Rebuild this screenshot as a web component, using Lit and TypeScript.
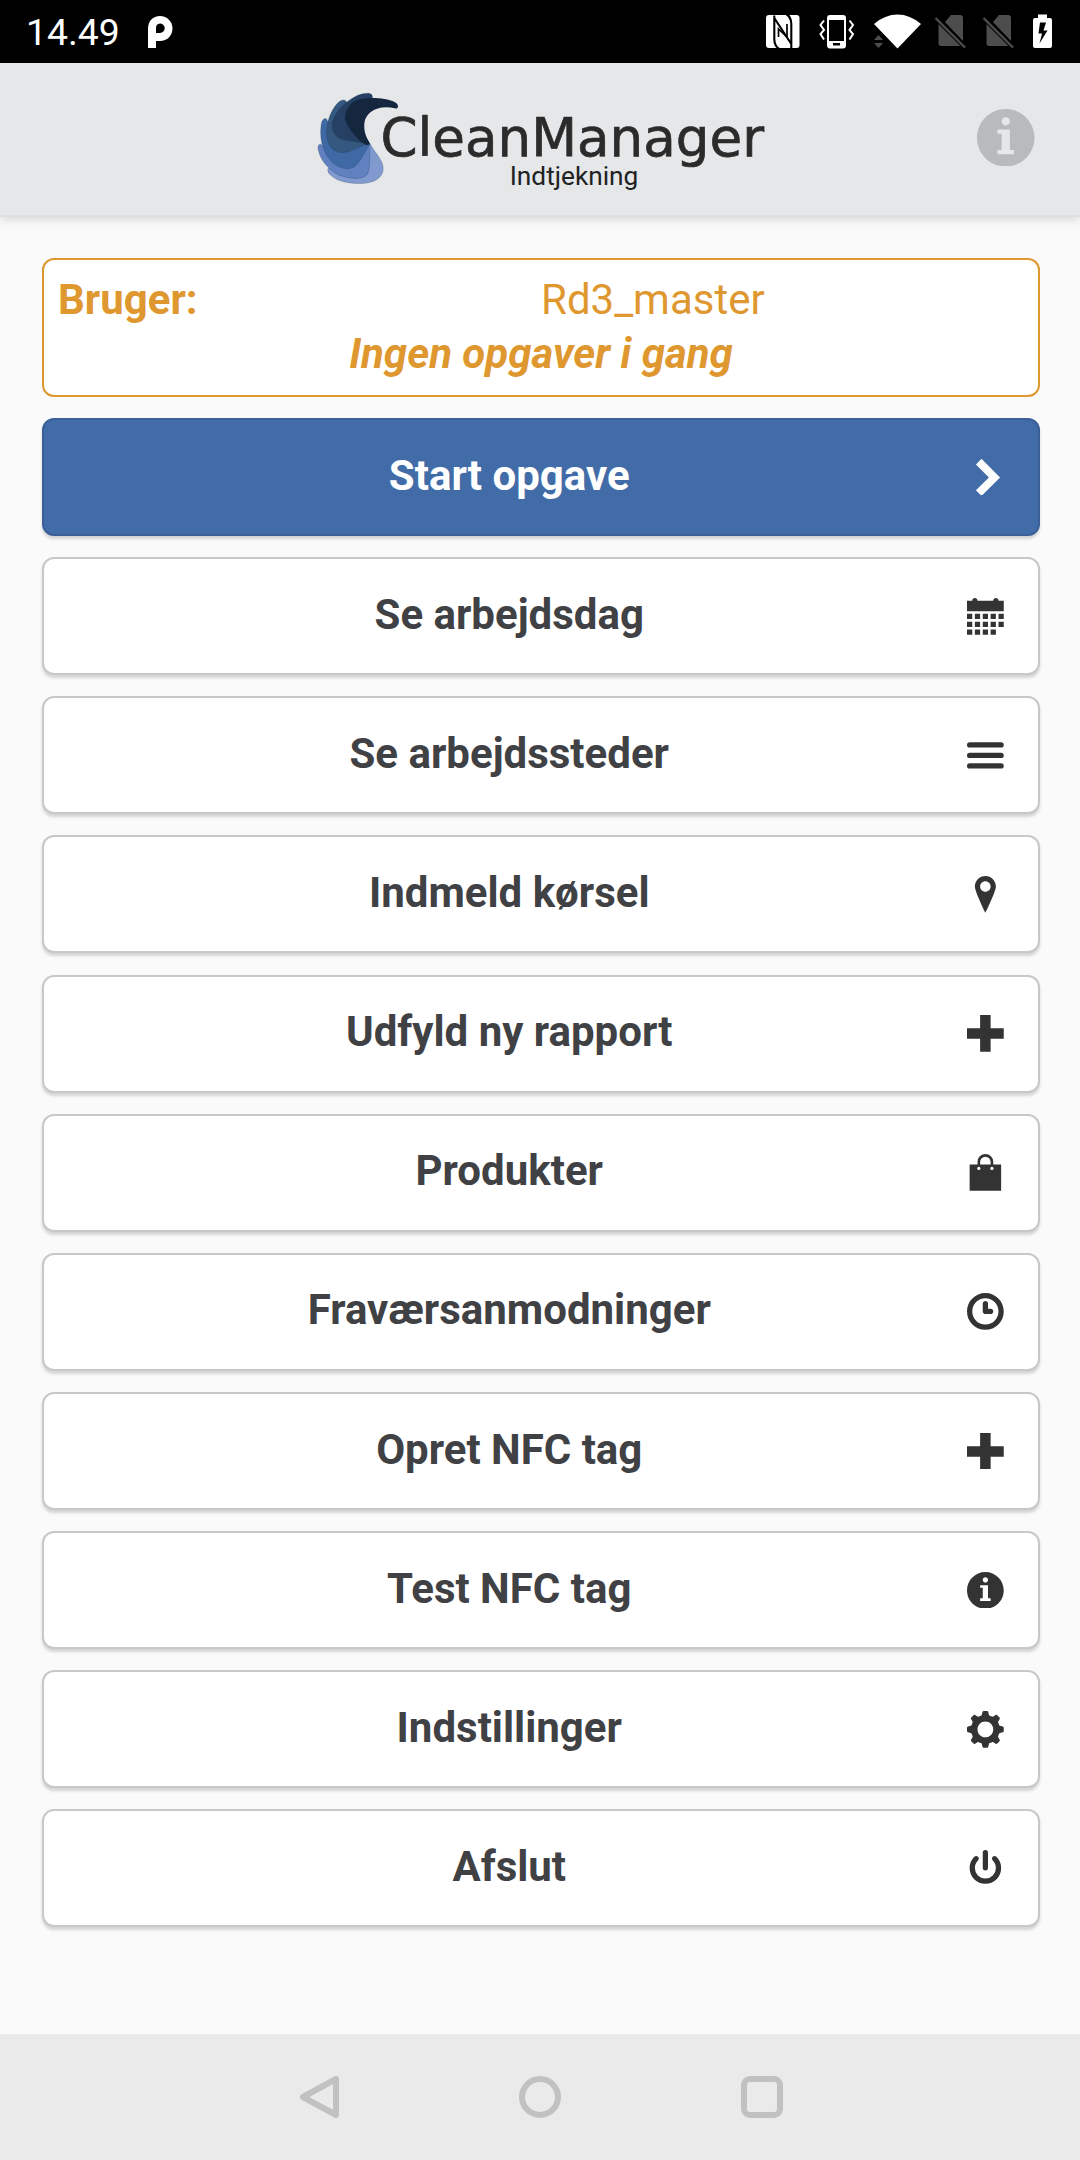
import { LitElement, html, css, svg } from "lit";
import { customElement } from "lit/decorators.js";

const INFO = svg`<path fill-rule="evenodd" d="M7,0C3.134,0,0,3.134,0,7s3.134,7,7,7s7-3.134,7-7S10.866,0,7,0z M7,2c0.552,0,1,0.447,1,1S7.552,4,7,4S6,3.553,6,3S6.448,2,7,2z M9,11H5v-1h1V6H5V5h3v5h1V11z"/>`;

const PLUS = svg`<polygon points="14,5 9,5 9,0 5,0 5,5 0,5 0,9 5,9 5,14 9,14 9,9 14,9"/>`;

const ICONS = {
  carat: svg`<polygon points="3.404,2.051 5.525,-0.071 12.6,7 5.525,14.071 3.404,11.949 8.354,7"/>`,
  calendar: svg`<path d="M0,8h2V6H0V8z M3,8h2V6H3V8z M6,8h2V6H6V8z M9,8h2V6H9V8z M12,8h2V6h-2V8z M0,11h2V9H0V11z M3,11h2V9H3V11z M6,11h2V9H6V11z M9,11h2V9H9V11z M12,11h2V9h-2V11z M0,14h2v-2H0V14z M3,14h2v-2H3V14z M6,14h2v-2H6V14z M9,14h2v-2H9V14z M12,1c0-0.553-0.447-1-1-1s-1,0.447-1,1H4c0-0.553-0.447-1-1-1S2,0.447,2,1H0v4h14V1H12z"/>`,
  bars: svg`<rect x="0" y="2" width="14" height="2" rx="1"/><rect x="0" y="6" width="14" height="2" rx="1"/><rect x="0" y="10" width="14" height="2" rx="1"/>`,
  location: svg`<path fill-rule="evenodd" d="M7,0C4.791,0,3,1.791,3,4c0,2,4,10,4,10s4-8,4-10C11,1.791,9.209,0,7,0z M7,6C5.896,6,5,5.104,5,4s0.896-2,2-2c1.104,0,2,0.896,2,2S8.104,6,7,6z"/>`,
  plus: PLUS,
  shop: svg`<rect x="1" y="4" width="12" height="10"/><path class="stroke" stroke-width="1" d="M4.5,5V3a2.5,2.5 0 0 1 5,0V5"/><circle class="hole" cx="4.5" cy="5.5" r=".6"/><circle class="hole" cx="9.5" cy="5.5" r=".6"/>`,
  clock: svg`<path fill-rule="evenodd" d="M7,0C3.134,0,0,3.134,0,7s3.134,7,7,7s7-3.134,7-7S10.866,0,7,0z M7,12c-2.762,0-5-2.238-5-5s2.238-5,5-5s5,2.238,5,5S9.762,12,7,12z"/><path d="M9,6H8V4c0-0.553-0.447-1-1-1S6,3.447,6,4v3c0,0.553,0.447,1,1,1h2c0.553,0,1-0.447,1-1S9.553,6,9,6z"/>`,
  info: INFO,
  gear: svg`<path fill-rule="evenodd" d="M13.621,5.904l-1.036-0.259c-0.168-0.042-0.303-0.168-0.355-0.332c-0.092-0.284-0.205-0.559-0.339-0.82c-0.079-0.153-0.073-0.337,0.017-0.486l0.549-0.915c0.118-0.196,0.088-0.448-0.075-0.61l-0.862-0.863c-0.162-0.163-0.414-0.193-0.611-0.075l-0.916,0.55C9.844,2.182,9.659,2.188,9.506,2.109C9.244,1.975,8.97,1.861,8.686,1.77c-0.165-0.052-0.29-0.187-0.332-0.354L8.095,0.379C8.039,0.156,7.839,0,7.609,0H6.391c-0.229,0-0.43,0.156-0.485,0.379L5.646,1.415C5.604,1.582,5.479,1.718,5.313,1.77c-0.284,0.092-0.559,0.206-0.82,0.34C4.339,2.188,4.155,2.182,4.007,2.093L3.092,1.544c-0.196-0.118-0.448-0.087-0.61,0.075L1.619,2.481C1.457,2.644,1.426,2.896,1.544,3.093l0.549,0.914c0.089,0.148,0.095,0.332,0.017,0.486C1.975,4.755,1.861,5.029,1.77,5.314c-0.053,0.164-0.188,0.29-0.354,0.332L0.379,5.905C0.156,5.961,0,6.161,0,6.391v1.219c0,0.229,0.156,0.43,0.379,0.485l1.036,0.26C1.582,8.396,1.717,8.521,1.77,8.687c0.092,0.284,0.205,0.559,0.34,0.82C2.188,9.66,2.182,9.844,2.093,9.993l-0.549,0.915c-0.118,0.195-0.087,0.448,0.075,0.61l0.862,0.862c0.162,0.163,0.414,0.193,0.61,0.075l0.915-0.549c0.148-0.089,0.332-0.095,0.486-0.017c0.262,0.135,0.536,0.248,0.82,0.34c0.165,0.053,0.291,0.187,0.332,0.354l0.259,1.036C5.96,13.844,6.16,14,6.39,14h1.22c0.229,0,0.43-0.156,0.485-0.379l0.259-1.036c0.042-0.167,0.168-0.302,0.333-0.354c0.284-0.092,0.559-0.205,0.82-0.34c0.154-0.078,0.338-0.072,0.486,0.017l0.914,0.549c0.197,0.118,0.449,0.088,0.611-0.074l0.862-0.863c0.163-0.162,0.193-0.415,0.075-0.611l-0.549-0.915c-0.089-0.148-0.096-0.332-0.017-0.485c0.134-0.263,0.248-0.536,0.339-0.82c0.053-0.165,0.188-0.291,0.355-0.333l1.036-0.259C13.844,8.039,14,7.839,14,7.609V6.39C14,6.16,13.844,5.96,13.621,5.904z M7,10c-1.657,0-3-1.343-3-3s1.343-3,3-3s3,1.343,3,3S8.657,10,7,10z"/>`,
  power: svg`<path class="stroke" stroke-width="2" stroke-linecap="round" d="M7,1V6.8M3.5,3.3A5,5 0 1 0 10.5,3.3"/>`,
};

type Item = { label: string; icon: keyof typeof ICONS; primary?: boolean };

const ITEMS: Item[] = [
  { label: "Start opgave", icon: "carat", primary: true },
  { label: "Se arbejdsdag", icon: "calendar" },
  { label: "Se arbejdssteder", icon: "bars" },
  { label: "Indmeld kørsel", icon: "location" },
  { label: "Udfyld ny rapport", icon: "plus" },
  { label: "Produkter", icon: "shop" },
  { label: "Fraværsanmodninger", icon: "clock" },
  { label: "Opret NFC tag", icon: "plus" },
  { label: "Test NFC tag", icon: "info" },
  { label: "Indstillinger", icon: "gear" },
  { label: "Afslut", icon: "power" },
];

@customElement("status-bar")
class StatusBar extends LitElement {
  static styles = css`
    :host {
      display: flex;
      height: 63px;
      background: #000;
      color: #fff;
      font: 37.300px/64px Roboto, sans-serif;
    }
    .time { padding-left: 26px; width: 95px; white-space: nowrap; }
    .icons { display: block; width: 959px; height: 63px; }
  `;
  render() {
    return html`
      <span class="time">14.49</span>
      <svg class="icons" viewBox="121 0 959 63" fill="#fff">
        <path fill-rule="evenodd" d="M148 48V29C148 21 153 16 160 16S172.500 21.500 172.500 28.500S167 41 160 41H156V48ZM160 23.500A4.500 4.500 0 0 0 156 28V33H160A4.500 4.500 0 0 0 160 23.500Z"/>
        <rect x="766" y="15" width="33.500" height="33" rx="3"/>
        <path d="M774.300 15.500V39C774.300 44 775.500 47 780 49.500M791.300 48V24C791.300 19 790 16 785.500 13.500M774.300 18L791.300 44" fill="none" stroke="#000" stroke-width="2.100"/>
        <path d="M778.500 37V29L787 37V24" fill="none" stroke="#000" stroke-width="1.700"/>
        <path fill-rule="evenodd" d="M830 15H843Q846 15 846 18V45Q846 48.500 843 48.500H830Q827 48.500 827 45V18Q827 15 830 15ZM829 20V41H844V20ZM833 43V45.500H840V43Z"/>
        <path d="M824 20.500L820.500 25L824 30L820.500 34L824 39.500M849.500 20.500L853 25L849.500 30L853 34L849.500 39.500" fill="none" stroke="#fff" stroke-width="2"/>
        <path d="M874 24Q885 14.500 897.500 14.500T921 24L897.500 48.500Z"/>
        <path fill="#4d4d4d" d="M874 40L878.500 35L883 40ZM874 43L878.500 48L883 43Z"/>
        <g id="no-sim">
          <path fill="#4d4d4d" d="M945 22L951 15H960Q963 15 963 18V41ZM938.500 24L960.500 46H941Q938.500 46 938.500 43Z"/>
          <path d="M935.500 18L965 47.500" stroke="#4d4d4d" stroke-width="2.400"/>
        </g>
        <use href="#no-sim" x="48"/>
        <path fill-rule="evenodd" d="M1038 14.500H1047V18H1050Q1052 18 1052 20V46Q1052 48 1050 48H1035Q1033 48 1033 46V20Q1033 18 1035 18H1038ZM1040 22.500L1038.500 33.500H1042L1039.500 43.500L1047.500 30.500H1043.500L1046 22.500Z"/>
      </svg>
    `;
  }
}

@customElement("page-header")
class PageHeader extends LitElement {
  static styles = css`
    :host {
      display: grid;
      grid-template-columns: 300px 1fr 300px;
      height: 152px;
      box-sizing: content-box;
      border-bottom: 2px solid #dedede;
      background: #e5e7e9;
      box-shadow: 0 3px 9px rgba(0, 0, 0, 0.13);
      position: relative;
    }
    .logo { grid-column: 2; display: block; width: 480px; height: 152px; }
    .brand { font-family: "DejaVu Sans", sans-serif; font-size: 52.500px; fill: #2b2b2b; stroke: #2b2b2b; stroke-width: 0.700px; }
    .sub { font-family: Roboto, sans-serif; font-size: 26.25px; fill: #222; }
    .info { justify-self: end; margin: 45.500px 45.500px 0 0; width: 57.500px; height: 57.500px; fill: #b8babb; }
  `;
  render() {
    return html`
      <svg class="logo" viewBox="300 63 480 152">
        <g transform="translate(300 70) scale(.33333)" stroke="#1c2f4b" stroke-opacity=".45" stroke-width="1.500">
          <path fill="#8099cf" d="M90 293C82 292 81 302 88 312C110 335 150 343 195 340C232 336 254 316 249 288C243 262 222 246 210 220Z"/>
          <path fill="#6080bf" d="M68 228C62 219 53 222 54 235C58 262 75 290 110 312C145 328 190 332 203 312C212 290 209 250 209 222Z"/>
          <path fill="#3f69a5" d="M82 153C80 141 68 144 64 160C58 200 64 242 95 276C118 297 150 302 166 288C186 268 196 244 209 222Z"/>
          <path fill="#34587f" d="M140 97C136 86 124 88 112 100C92 122 80 155 80 190C82 228 98 248 130 248C160 245 180 225 209 222Z"/>
          <path fill="#264063" d="M217 86C220 70 208 67 185 72C155 80 112 112 97 155C93 185 106 205 138 211C165 216 185 218 209 222L165 140Z"/>
          <path fill="#15273f" stroke="none" d="M285 115Q292 118 294 110Q294 101 284 96C255 83 205 80 172 90C148 98 134 125 135 148C142 172 175 214 198 225Q210 226 208 217C196 200 190 176 194 154C201 127 232 103 285 115Z"/>
        </g>
        <text class="brand" x="380.500" y="155.500" textLength="383.500" lengthAdjust="spacingAndGlyphs">CleanManager</text>
        <text class="sub" x="509.700" y="185">Indtjekning</text>
      </svg>
      <svg class="info" viewBox="0 0 14 14">${INFO}</svg>
    `;
  }
}

@customElement("menu-button")
class MenuButton extends LitElement {
  static properties = { item: { attribute: false } };
  declare item: Item;
  static styles = css`
    :host { display: block; }
    .btn {
      display: grid;
      grid-template-columns: 1fr 37px;
      align-items: center;
      box-sizing: border-box;
      width: 100%;
      height: 118px;
      margin: 0;
      padding: 0 34px 2px 31.500px;
      border: 2px solid #c8c8c8;
      border-radius: 12px;
      background: #fff;
      box-shadow: 0 3px 3px rgba(0, 0, 0, 0.15);
      color: #404144;
      font: bold 42px/54.600px Roboto, sans-serif;
      text-align: center;
    }
    .label { padding-right: 24px; white-space: nowrap; }
    .icon { width: 36.750px; height: 36.750px; margin-top: 2px; fill: #333; }
    .stroke { fill: none; stroke: #333; }
    .hole { fill: #fff; }
    .primary { background: #426ca8; border-color: #3a6097; color: #fff; }
    .primary .icon { fill: #fff; }
  `;
  render() {
    const { label, icon, primary } = this.item;
    return html`
      <button class="btn ${primary ? "primary" : ""}">
        <span class="label">${label}</span>
        <svg class="icon" viewBox="0 0 14 14">${ICONS[icon]}</svg>
      </button>
    `;
  }
}

@customElement("nav-bar")
class NavBar extends LitElement {
  static styles = css`
    :host {
      display: flex;
      justify-content: center;
      align-items: center;
      gap: 180px;
      height: 126px;
      background: #eaeaea;
    }
    .icon { width: 42px; height: 42px; fill: none; stroke: #c1c1c1; stroke-width: 6; stroke-linejoin: round; }
  `;
  render() {
    return html`
      <svg class="icon" viewBox="0 0 42 42"><path d="M39 3V39L6 21Z"/></svg>
      <svg class="icon" viewBox="0 0 42 42"><circle cx="21" cy="21" r="18"/></svg>
      <svg class="icon" viewBox="0 0 42 42"><rect x="3" y="3" width="36" height="36" rx="6"/></svg>
    `;
  }
}

@customElement("app-root")
class AppRoot extends LitElement {
  static styles = css`
    :host {
      display: flex;
      flex-direction: column;
      width: 1080px;
      height: 2160px;
      background: #fafafa;
      font-family: Roboto, sans-serif;
    }
    .content { flex: 1; padding: 41px 40px 0 42px; }
    .user {
      display: grid;
      grid-template-columns: 1fr 1fr;
      align-content: start;
      box-sizing: border-box;
      height: 139px;
      padding: 13px 14px 0;
      border: 2px solid #df972f;
      border-radius: 12px;
      background: #fff;
      color: #df972f;
      font-size: 42px;
      line-height: 54px;
    }
    .label { font-weight: bold; }
    .status { grid-column: 1 / 3; text-align: center; font-weight: bold; font-style: italic; }
    .menu { display: flex; flex-direction: column; gap: 21.140px; margin-top: 21px; }
  `;
  render() {
    return html`
      <status-bar></status-bar>
      <page-header></page-header>
      <main class="content">
        <section class="user">
          <span class="label">Bruger:</span>
          <span>Rd3_master</span>
          <span class="status">Ingen opgaver i gang</span>
        </section>
        <nav class="menu">
          ${ITEMS.map((item) => html`<menu-button .item=${item}></menu-button>`)}
        </nav>
      </main>
      <nav-bar></nav-bar>
    `;
  }
}
